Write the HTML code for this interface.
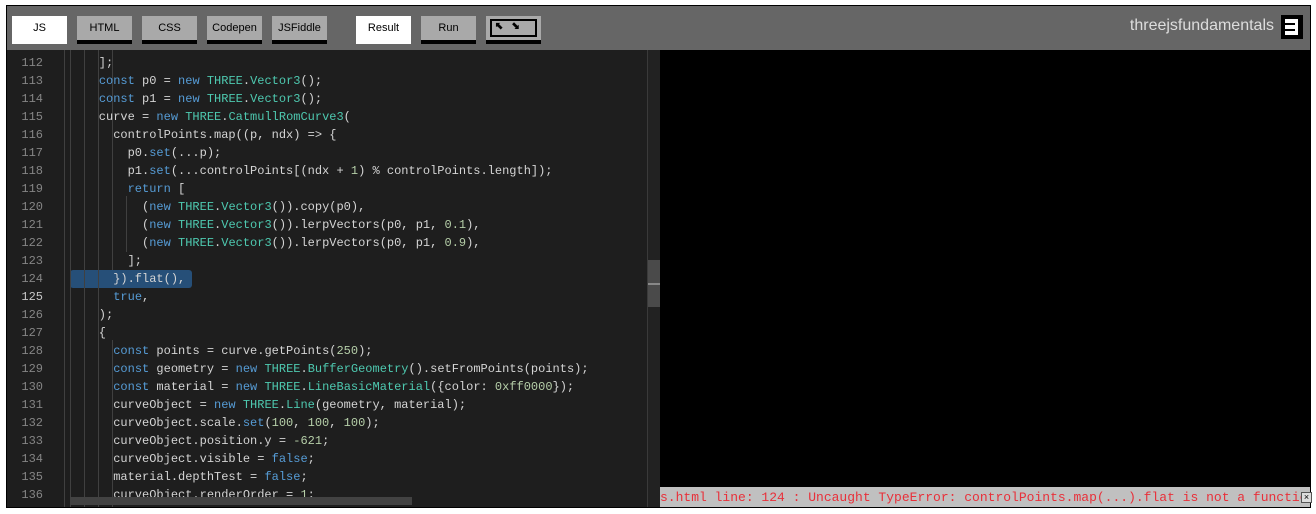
<!DOCTYPE html>
<html><head><style>
body{margin:0;background:#fff;width:1316px;height:514px;overflow:hidden;position:relative;font-family:"Liberation Sans",sans-serif}
#frame{position:absolute;left:6px;top:5px;width:1305px;height:503px;background:#000}
#tb{position:absolute;left:7px;top:6px;width:1303px;height:44px;background:#666}
.b{position:absolute;top:10px;width:55px;height:24px;background:#a9a9a9;color:#000;font-size:11px;text-align:center;line-height:24px;border-bottom:4px solid #000}
.w{background:#fff;border-bottom:4px solid #fff;height:24px}
#ed{position:absolute;left:7px;top:50px;width:640px;height:457px;background:#1e1e1e;overflow:hidden;font-family:"Liberation Mono",monospace;font-size:12px}
.ln{position:absolute;left:0;width:36px;text-align:right;color:#858585;height:18px;line-height:18px}
.cd{position:absolute;left:63px;height:18px;line-height:18px;color:#d4d4d4;white-space:pre}
.k{color:#569cd6}.t{color:#4ec9b0}.n{color:#b5cea8}
.g{position:absolute;top:0;width:1px;background:#404040}
#vs{position:absolute;left:647px;top:50px;width:13px;height:457px;background:#222;border-left:1px solid #3a3a3a}
#err{position:absolute;left:660px;top:487px;width:650px;height:20px;background:#c0c0c0;color:#e8303a;font-family:"Liberation Mono",monospace;font-size:13px;line-height:21px;white-space:pre;overflow:hidden}
</style></head><body>
<div id="frame"></div>
<div id="tb">
<div class="b w" style="left:5px">JS</div>
<div class="b" style="left:70px">HTML</div>
<div class="b" style="left:135px">CSS</div>
<div class="b" style="left:200px">Codepen</div>
<div class="b" style="left:265px">JSFiddle</div>
<div class="b w" style="left:349px">Result</div>
<div class="b" style="left:414px">Run</div>
<div class="b" style="left:479px"><div style="position:absolute;left:4px;top:3px;width:43px;height:14px;border:2px solid #000;font-size:10px;line-height:12px;font-weight:bold;text-align:left">&nbsp;⬉&nbsp;&nbsp;&nbsp;⬊</div></div>
<div style="position:absolute;right:36px;top:11px;color:#ddd;font-size:16px">threejsfundamentals</div>
<div style="position:absolute;right:7px;top:9px;width:22px;height:24px;background:#000"><div style="position:absolute;left:4px;top:4px;width:13px;height:16px;background:#fff"></div><div style="position:absolute;left:4px;top:8px;width:10px;height:2px;background:#000"></div><div style="position:absolute;left:4px;top:14px;width:10px;height:2px;background:#000"></div></div>
</div>
<div id="ed">
<div style="position:absolute;left:63px;top:220px;width:122px;height:18px;background:#264f78;border-radius:3px"></div>
<div class="g" style="left:57px;height:457px"></div>
<div class="g" style="left:63px;height:457px"></div>
<div class="g" style="left:77px;height:457px"></div>
<div class="g" style="left:91px;height:457px"></div>
<div class="g" style="left:105px;top:0;height:220px"></div>
<div class="g" style="left:119px;top:146px;height:56px"></div>
<div class="g" style="left:133px;top:146px;height:56px;display:none"></div>
<div class="g" style="left:105px;top:290px;height:167px"></div>
<div id="code"></div>
<div style="position:absolute;left:63px;top:447px;width:342px;height:8px;background:#424242"></div>
</div>
<div id="vs"><div style="position:absolute;left:0;top:210px;width:13px;height:47px;background:#4a4a4a"></div><div style="position:absolute;left:0;top:233px;width:13px;height:2px;background:#888"></div></div>
<div style="position:absolute;left:660px;top:50px;width:650px;height:437px;background:#000"></div>
<div id="err">s.html line: 124 : Uncaught TypeError: controlPoints.map(...).flat is not a function</div>
<div style="position:absolute;left:1301px;top:492px;width:9px;height:9px;background:#ddd;border:1px solid #555;font-size:9px;line-height:9px;text-align:center">×</div>
<script>
var L=[
[112,'    ];'],
[113,'    <span class=k>const</span> p0 = <span class=k>new</span> <span class=t>THREE</span>.<span class=t>Vector3</span>();'],
[114,'    <span class=k>const</span> p1 = <span class=k>new</span> <span class=t>THREE</span>.<span class=t>Vector3</span>();'],
[115,'    curve = <span class=k>new</span> <span class=t>THREE</span>.<span class=t>CatmullRomCurve3</span>('],
[116,'      controlPoints.map((p, ndx) => {'],
[117,'        p0.<span class=k>set</span>(...p);'],
[118,'        p1.<span class=k>set</span>(...controlPoints[(ndx + <span class=n>1</span>) % controlPoints.length]);'],
[119,'        <span class=k>return</span> ['],
[120,'          (<span class=k>new</span> <span class=t>THREE</span>.<span class=t>Vector3</span>()).copy(p0),'],
[121,'          (<span class=k>new</span> <span class=t>THREE</span>.<span class=t>Vector3</span>()).lerpVectors(p0, p1, <span class=n>0.1</span>),'],
[122,'          (<span class=k>new</span> <span class=t>THREE</span>.<span class=t>Vector3</span>()).lerpVectors(p0, p1, <span class=n>0.9</span>),'],
[123,'        ];'],
[124,'      }).flat(),'],
[125,'      <span class=k>true</span>,'],
[126,'    );'],
[127,'    {'],
[128,'      <span class=k>const</span> points = curve.getPoints(<span class=n>250</span>);'],
[129,'      <span class=k>const</span> geometry = <span class=k>new</span> <span class=t>THREE</span>.<span class=t>BufferGeometry</span>().setFromPoints(points);'],
[130,'      <span class=k>const</span> material = <span class=k>new</span> <span class=t>THREE</span>.<span class=t>LineBasicMaterial</span>({color: <span class=n>0xff0000</span>});'],
[131,'      curveObject = <span class=k>new</span> <span class=t>THREE</span>.<span class=t>Line</span>(geometry, material);'],
[132,'      curveObject.scale.<span class=k>set</span>(<span class=n>100</span>, <span class=n>100</span>, <span class=n>100</span>);'],
[133,'      curveObject.position.y = <span class=n>-621</span>;'],
[134,'      curveObject.visible = <span class=k>false</span>;'],
[135,'      material.depthTest = <span class=k>false</span>;'],
[136,'      curveObject.renderOrder = <span class=n>1</span>;']];
var h='';L.forEach(function(l,i){var y=i*18+4;h+='<div class=ln style="top:'+y+'px'+(l[0]==125?';color:#c6c6c6':'')+'">'+l[0]+'</div><div class=cd style="top:'+y+'px">'+l[1]+'</div>';});
document.getElementById('code').innerHTML=h;
</script>
</body></html>
